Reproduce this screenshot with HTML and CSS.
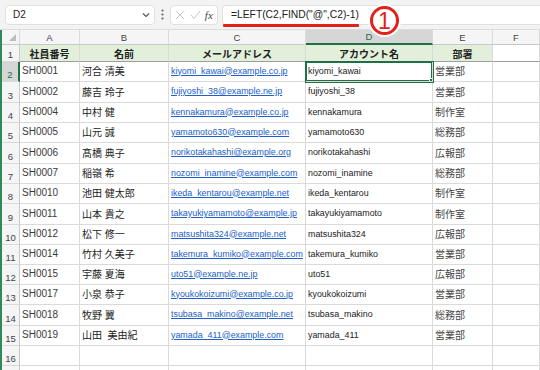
FILE: index.html
```html
<!DOCTYPE html>
<html lang="ja">
<head>
<meta charset="utf-8">
<title>Sheet</title>
<link rel="stylesheet" href="styles.css">
</head>
<body>
<div class="app">
  <div class="fbar">
    <div class="namebox"><span>D2</span>
      <svg class="chev" width="8" height="6" viewBox="0 0 8 6"><path d="M1 1.5 L4 4.5 L7 1.5" fill="none" stroke="#555" stroke-width="1.2"/></svg>
    </div>
    <div class="sep"><svg width="3" height="11" viewBox="0 0 3 11"><circle cx="1.5" cy="1.5" r="1.1" fill="#666"/><circle cx="1.5" cy="5.5" r="1.1" fill="#666"/><circle cx="1.5" cy="9.5" r="1.1" fill="#666"/></svg></div>
    <div class="fxbox">
      <svg width="10" height="10" viewBox="0 0 10 10"><path d="M1 1 L9 9 M9 1 L1 9" stroke="#c4c4c4" stroke-width="1"/></svg>
      <svg width="11" height="10" viewBox="0 0 11 10"><path d="M1 5 L4 8.5 L10 1" fill="none" stroke="#c4c4c4" stroke-width="1"/></svg>
      <span class="fx">fx</span>
    </div>
    <div class="formula"><span>=LEFT(C2,FIND("@",C2)-1)</span></div>
  </div>

  <div class="sheet">
    <div class="c corner"><svg width="7" height="7" viewBox="0 0 7 7"><polygon points="7,0 7,7 0,7" fill="#bdbdbd"/></svg></div>
    <div class="c ch">A</div>
    <div class="c ch">B</div>
    <div class="c ch">C</div>
    <div class="c ch selcol">D</div>
    <div class="c ch">E</div>
    <div class="c ch">F</div>

    <div class="c rh">1</div>
    <div class="c h1">社員番号</div>
    <div class="c h1">名前</div>
    <div class="c h1">メールアドレス</div>
    <div class="c h1">アカウント名</div>
    <div class="c h1">部署</div>
    <div class="c h1f"></div>

    <div class="c rh selrow">2</div>
    <div class="c id">SH0001</div><div class="c nm">河合 清美</div><div class="c em"><span class="link">kiyomi_kawai@example.co.jp</span></div><div class="c ac active">kiyomi_kawai</div><div class="c dp">営業部</div><div class="c"></div>

    <div class="c rh">3</div>
    <div class="c id">SH0002</div><div class="c nm">藤吉 玲子</div><div class="c em"><span class="link">fujiyoshi_38@example.ne.jp</span></div><div class="c ac">fujiyoshi_38</div><div class="c dp">営業部</div><div class="c"></div>

    <div class="c rh">4</div>
    <div class="c id">SH0004</div><div class="c nm">中村 健</div><div class="c em"><span class="link">kennakamura@example.co.jp</span></div><div class="c ac">kennakamura</div><div class="c dp">制作室</div><div class="c"></div>

    <div class="c rh">5</div>
    <div class="c id">SH0005</div><div class="c nm">山元 誠</div><div class="c em"><span class="link">yamamoto630@example.com</span></div><div class="c ac">yamamoto630</div><div class="c dp">総務部</div><div class="c"></div>

    <div class="c rh">6</div>
    <div class="c id">SH0006</div><div class="c nm">髙橋 典子</div><div class="c em"><span class="link">norikotakahashi@example.org</span></div><div class="c ac">norikotakahashi</div><div class="c dp">広報部</div><div class="c"></div>

    <div class="c rh">7</div>
    <div class="c id">SH0007</div><div class="c nm">稲嶺 希</div><div class="c em"><span class="link">nozomi_inamine@example.com</span></div><div class="c ac">nozomi_inamine</div><div class="c dp">総務部</div><div class="c"></div>

    <div class="c rh">8</div>
    <div class="c id">SH0010</div><div class="c nm">池田 健太郎</div><div class="c em"><span class="link">ikeda_kentarou@example.net</span></div><div class="c ac">ikeda_kentarou</div><div class="c dp">制作室</div><div class="c"></div>

    <div class="c rh">9</div>
    <div class="c id">SH0011</div><div class="c nm">山本 貴之</div><div class="c em"><span class="link">takayukiyamamoto@example.jp</span></div><div class="c ac">takayukiyamamoto</div><div class="c dp">制作室</div><div class="c"></div>

    <div class="c rh">10</div>
    <div class="c id">SH0012</div><div class="c nm">松下 修一</div><div class="c em"><span class="link">matsushita324@example.net</span></div><div class="c ac">matsushita324</div><div class="c dp">広報部</div><div class="c"></div>

    <div class="c rh">11</div>
    <div class="c id">SH0014</div><div class="c nm">竹村 久美子</div><div class="c em"><span class="link">takemura_kumiko@example.com</span></div><div class="c ac">takemura_kumiko</div><div class="c dp">営業部</div><div class="c"></div>

    <div class="c rh">12</div>
    <div class="c id">SH0015</div><div class="c nm">宇藤 夏海</div><div class="c em"><span class="link">uto51@example.ne.jp</span></div><div class="c ac">uto51</div><div class="c dp">広報部</div><div class="c"></div>

    <div class="c rh">13</div>
    <div class="c id">SH0017</div><div class="c nm">小泉 恭子</div><div class="c em"><span class="link">kyoukokoizumi@example.co.jp</span></div><div class="c ac">kyoukokoizumi</div><div class="c dp">営業部</div><div class="c"></div>

    <div class="c rh">14</div>
    <div class="c id">SH0018</div><div class="c nm">牧野 翼</div><div class="c em"><span class="link">tsubasa_makino@example.net</span></div><div class="c ac">tsubasa_makino</div><div class="c dp">総務部</div><div class="c"></div>

    <div class="c rh">15</div>
    <div class="c id">SH0019</div><div class="c nm">山田  美由紀</div><div class="c em"><span class="link">yamada_411@example.com</span></div><div class="c ac">yamada_411</div><div class="c dp">営業部</div><div class="c"></div>

    <div class="c rh">16</div>
    <div class="c"></div><div class="c"></div><div class="c"></div><div class="c"></div><div class="c"></div><div class="c"></div>

    <div class="c rh"></div>
    <div class="c"></div><div class="c"></div><div class="c"></div><div class="c"></div><div class="c"></div><div class="c"></div>
  </div>

  <div class="uline"></div>
  <div class="badge">1</div>
</div>
</body>
</html>
```

FILE: styles.css
```css
html, body {
  margin: 0;
  padding: 0;
}
body {
  width: 540px;
  height: 370px;
  overflow: hidden;
  background: #fff;
  font-family: "Liberation Sans", "Noto Sans CJK JP", sans-serif;
  color: #333;
}
.app {
  position: relative;
  width: 540px;
  height: 370px;
  overflow: hidden;
}

/* formula bar */
.fbar {
  height: 30px;
  box-sizing: border-box;
  background: #f3f3f3;
  display: flex;
  align-items: center;
  padding-left: 5px;
  border-bottom: 1px solid #dcdcdc;
}
.namebox {
  width: 150px;
  height: 20px;
  box-sizing: border-box;
  background: #fff;
  border: 1px solid #e0e0e0;
  border-radius: 4px;
  display: flex;
  align-items: center;
  justify-content: space-between;
  padding: 0 4px 0 7px;
  font-size: 10px;
  color: #222;
}
.sep {
  width: 15px;
  display: flex;
  justify-content: center;
  align-items: center;
}
.fxbox {
  width: 48px;
  height: 20px;
  box-sizing: border-box;
  background: #fff;
  border: 1px solid #e0e0e0;
  border-radius: 4px;
  display: flex;
  align-items: center;
  justify-content: space-around;
  padding: 0 2px;
}
.fx {
  font-family: "Liberation Serif", serif;
  font-style: italic;
  font-size: 11px;
  color: #444;
}
.formula {
  margin-left: 4px;
  flex: 1;
  height: 20px;
  box-sizing: border-box;
  background: #fff;
  border: 1px solid #e0e0e0;
  border-right: none;
  border-radius: 4px 0 0 4px;
  padding-left: 8px;
  display: flex;
  align-items: center;
  font-size: 10.3px;
  color: #222;
}

/* sheet */
.sheet {
  display: grid;
  border-left: 2px solid #2e8b57;
  grid-template-columns: 18px 60px 89px 137px 127px 60px 1fr;
  grid-template-rows: 15px 17px 20px 21px 20px 20px 21px 20px 20px 21px 20px 20px 20px 20px 21px 20px 20px 20px;
}
.c {
  box-sizing: border-box;
  border-right: 1px solid #dadada;
  border-bottom: 1px solid #dadada;
  overflow: hidden;
  white-space: nowrap;
  display: flex;
  align-items: center;
  padding: 0 2px 2px;
  font-size: 10px;
}
.corner {
  background: #f5f5f5;
  border-bottom-color: #c8c8c8;
  justify-content: flex-end;
  align-items: flex-end;
  padding: 0 3px 3px 0;
}
.ch {
  background: #f5f5f5;
  border-bottom-color: #c8c8c8;
  justify-content: center;
  padding: 0;
  font-size: 9.5px;
  color: #444;
}
.selcol {
  background: #d6d6d6;
  color: #1e7145;
  border-bottom: 2px solid #1e7145;
}
.rh {
  background: #f5f5f5;
  border-right-color: #c8c8c8;
  justify-content: center;
  align-items: flex-end;
  padding: 0 0 1px;
  font-size: 9.5px;
  color: #444;
}
.selrow {
  background: #d6d6d6;
  color: #1e7145;
  border-right: 2px solid #1e7145;
}
.h1 {
  background: #e2efda;
  border-bottom-color: #9e9e9e;
  justify-content: center;
  font-family: "Noto Sans CJK JP", sans-serif;
  font-weight: bold;
  font-size: 10px;
  padding: 0;
  color: #222;
}
.h1f {
  border-bottom-color: #9e9e9e;
}
.id {
  font-size: 10px;
  color: #3a3a3a;
}
.nm {
  white-space: pre;
  font-size: 10px;
  color: #222;
}
.em {
  font-size: 8.9px;
}
.link {
  color: #2060cc;
  text-decoration: underline;
}
.ac {
  font-size: 8.9px;
  color: #222;
}
.dp {
  font-family: "Noto Sans CJK JP", sans-serif;
  font-size: 10px;
  color: #444;
}
.active {
  position: relative;
  z-index: 1;
  box-shadow: 0 0 0 1px #1e7145, inset 0 0 0 1px #1e7145;
}
.active::after {
  content: "";
  position: absolute;
  right: -3px;
  bottom: -3px;
  width: 4px;
  height: 4px;
  background: #1e7145;
  border: 1px solid #fff;
}

/* annotation overlays */
.uline {
  position: absolute;
  left: 223px;
  top: 24px;
  width: 136px;
  height: 3px;
  background: #e3211c;
  border-radius: 1px;
}
.badge {
  position: absolute;
  left: 370px;
  top: 6px;
  width: 29px;
  height: 29px;
  box-sizing: border-box;
  border: 3px solid #e3211c;
  border-radius: 50%;
  background: #fff;
  box-shadow: 0 0 0 2px #fff;
  color: #e3211c;
  font-family: "Liberation Sans", sans-serif;
  font-weight: normal;
  font-size: 23px;
  line-height: 1;
  padding-top: 1px;
  display: flex;
  align-items: center;
  justify-content: center;
}
```
